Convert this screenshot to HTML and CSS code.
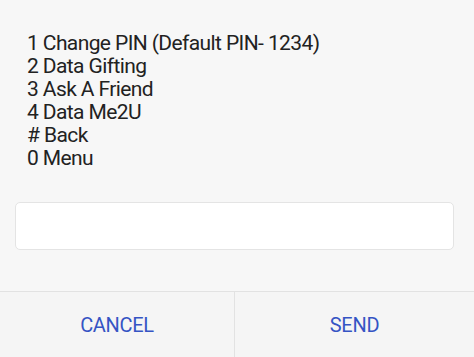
FILE: index.html
```html
<!DOCTYPE html>
<html>
<head>
<meta charset="utf-8">
<link rel="stylesheet" href="styles.css">
</head>
<body>
<div class="dialog">
  <div class="content">
    <div class="menu">
      <div class="line">1 Change PIN (Default PIN- 1234)</div>
      <div class="line">2 Data Gifting</div>
      <div class="line">3 Ask A Friend</div>
      <div class="line">4 Data Me2U</div>
      <div class="line"># Back</div>
      <div class="line">0 Menu</div>
    </div>
    <div class="input"></div>
  </div>
  <div class="actions">
    <div class="btn">CANCEL</div>
    <div class="btn btn-right">SEND</div>
  </div>
</div>
</body>
</html>
```
FILE: styles.css
```css
html, body {
  margin: 0;
  padding: 0;
  background: #f7f7f7;
}
body {
  font-family: Roboto, "Noto Sans", sans-serif;
  width: 474px;
  height: 357px;
  overflow: hidden;
}
.dialog {
  display: flex;
  flex-direction: column;
  height: 357px;
}
.content {
  padding: 32px 20px 0 15px;
  height: 291px;
  box-sizing: border-box;
}
.menu {
  padding-left: 12px;
  font-size: 21px;
  line-height: 23px;
  letter-spacing: -0.6px;
  color: #222222;
}
.input {
  margin-top: 32px;
  height: 48px;
  box-sizing: border-box;
  background: #ffffff;
  border: 1px solid #e4e4e4;
  border-radius: 5px;
}
.actions {
  display: grid;
  grid-template-columns: 234px 1fr;
  border-top: 1px solid #e2e2e2;
  flex: 1;
  background: #f5f5f5;
}
.btn {
  display: flex;
  align-items: center;
  justify-content: center;
  font-size: 20px;
  letter-spacing: -0.3px;
  color: #3554c4;
}
.btn-right {
  border-left: 1px solid #e2e2e2;
}
```
